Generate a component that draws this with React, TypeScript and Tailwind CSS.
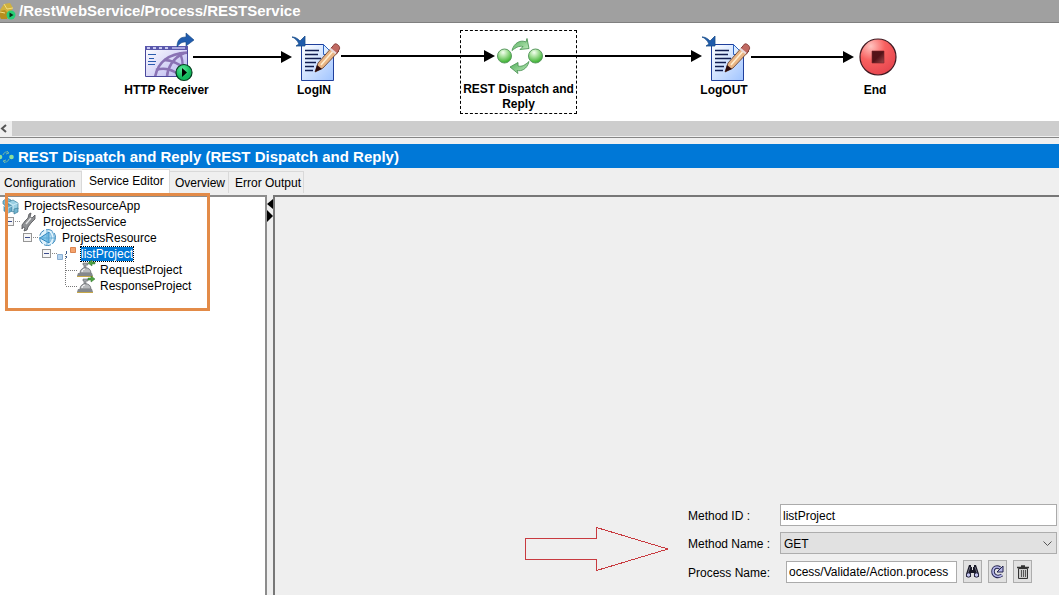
import React from 'react';

const links = [
  [193, 281, 57],
  [341, 484, 56],
  [545, 691, 56],
  [751, 843, 57],
];

function Connectors() {
  return (
    <svg className="absolute left-0 top-0" width="1059" height="98" viewBox="0 23 1059 98" aria-hidden="true">
      {links.map(([from, to, y]) => (
        <g key={from}>
          <path d={`M${from} ${y}H${to}`} stroke="#000" strokeWidth="2" />
          <path d={`M${to} ${y - 6}L${to + 11} ${y}L${to} ${y + 6}z`} />
        </g>
      ))}
    </svg>
  );
}

function ReceiverIcon() {
  return (
    <svg className="overflow-visible" width="50" height="50" viewBox="0 0 50 50" aria-hidden="true">
      <defs>
        <linearGradient id="rcvWin" x1="0" y1="0" x2="1" y2="1">
          <stop offset="0" stopColor="#fff" />
          <stop offset="1" stopColor="#b7b4f0" />
        </linearGradient>
        <radialGradient id="rcvPlay" cx=".4" cy=".3">
          <stop offset="0" stopColor="#5be89a" />
          <stop offset="1" stopColor="#12b85c" />
        </radialGradient>
        <clipPath id="rcvClip"><path d="M4 18h41v25H4z" /></clipPath>
      </defs>
      <path d="M3.500 13.500h42v30h-42z" fill="url(#rcvWin)" stroke="#4a489c" />
      <path d="M3 13h43v4H3z" fill="#5a58ac" />
      <path d="M5 15h24" stroke="#c9c8f2" strokeWidth="2" strokeDasharray="3 3" />
      <path d="M30 15h13" stroke="#a9a7de" strokeWidth="2" />
      <path d="M6 21.500h8M7 25.500h5M6 28.500h8M6 31.500h7" stroke="#2c5cae" />
      <g clipPath="url(#rcvClip)" stroke="#8a72b4" strokeWidth="2.600" fill="none">
        <path d="M13 45C15 30 26 20 47 19.500" />
        <path d="M22 27C30 27 38 31 46 38" />
        <path d="M14 37C22 34 32 36 40 45" />
        <path d="M25 45C25 35 31 25 42 20" />
        <path d="M37 20C42 26 41 36 37 45" />
      </g>
      <path d="M35 14c0-7 3-10 9-10V0l8 7-8 6V9c-4 0-6 1-9 5z" fill="#205cae" stroke="#174780" strokeWidth=".6" />
      <circle cx="42" cy="39.500" r="8" fill="url(#rcvPlay)" stroke="#063d20" strokeWidth="1.200" />
      <path d="M40 35l5 4.500-5 4.500z" />
    </svg>
  );
}

function LogIcon() {
  return (
    <svg width="50" height="50" viewBox="0 0 50 50" aria-hidden="true">
      <defs>
        <linearGradient id="logPage" x1="0" y1="0" x2="1" y2="1">
          <stop offset="0" stopColor="#fff" />
          <stop offset="1" stopColor="#a0c4ff" />
        </linearGradient>
      </defs>
      <path d="M9.500 11.500h22l10 10v26h-32z" fill="url(#logPage)" stroke="#1f3f9c" />
      <path d="M31.500 11.500l10 10h-10z" fill="#dcecff" stroke="#2e62c0" />
      <path d="M13 17.500h14M13 21.500h13M13 25.500h16M13 29.500h11M13 33.500h9M13 37.500h8" stroke="#101c50" strokeWidth="1.300" />
      <path d="M23 39l3-9 15-17 6 5-16 17z" fill="#e9b584" stroke="#5c3524" strokeWidth=".8" />
      <path d="M29 32l13-15" stroke="#fff0d2" strokeWidth="1.500" />
      <path d="M38.500 16l4-5c2-1 6 2 5 5l-3 5z" fill="#c06a62" stroke="#7d3331" strokeWidth=".8" />
      <path d="M38 15.500l6 5" stroke="#e9dada" strokeWidth="2" />
      <path d="M23 39l2-7 5 4z" fill="#2b0b0b" />
      <path d="M0 4c3 0 5 1 8 4l5-5v10H4l3-2C5 7 3 5 0 4z" fill="#205cab" stroke="#1b4f8c" strokeWidth=".8" />
    </svg>
  );
}

function DispatchIcon() {
  return (
    <svg width="50" height="50" viewBox="0 0 50 50" aria-hidden="true">
      <defs>
        <radialGradient id="ball" cx=".4" cy=".25" r=".7">
          <stop offset="0" stopColor="#f4fff0" />
          <stop offset=".45" stopColor="#a6e09a" />
          <stop offset="1" stopColor="#42b437" />
        </radialGradient>
        <linearGradient id="swap" x1="0" y1="0" x2="1" y2="1">
          <stop offset="0" stopColor="#4fae58" />
          <stop offset="1" stopColor="#c4ecc0" />
        </linearGradient>
      </defs>
      <g stroke="#5b9a62" fill="url(#ball)">
        <circle cx="8.500" cy="24" r="7" />
        <circle cx="39.500" cy="24" r="7" />
      </g>
      <g stroke="#4f9658" strokeWidth=".9" fill="url(#swap)">
        <path d="M16 18.500c2-8 9-11 14-8.500l1-3.500 2 10-9 1 3-3c-4-1-7 1-11 4z" />
        <path d="M33 29.500c-2 8-8 10-12 9l1 3-8-6.500 8-4.500v3.500c4 1 7-1 11-4.500z" />
      </g>
    </svg>
  );
}

function EndIcon() {
  return (
    <svg width="50" height="50" viewBox="0 0 50 50" aria-hidden="true">
      <defs>
        <radialGradient id="endRed" cx=".3" cy=".2" r=".8">
          <stop offset="0" stopColor="#ffc4c0" />
          <stop offset=".5" stopColor="#f8605f" />
          <stop offset="1" stopColor="#e84850" />
        </radialGradient>
        <linearGradient id="endStop" x1="0" y1="0" x2="1" y2="1">
          <stop offset=".5" stopColor="#541318" />
          <stop offset="1" stopColor="#a04a4d" />
        </linearGradient>
      </defs>
      <circle cx="28" cy="24" r="18" fill="url(#endRed)" stroke="#3f1a22" strokeWidth="1.200" />
      <path d="M22 18h12v12H22z" fill="url(#endStop)" stroke="#7a2328" strokeWidth=".6" />
    </svg>
  );
}

function Node({ place, label, children }: { place: string; label: string; children: React.ReactNode }) {
  return (
    <div className={`absolute flex flex-col items-center text-center text-xs font-bold leading-[15px] ${place}`}>
      {children}
      <span>{label}</span>
    </div>
  );
}

function Canvas() {
  return (
    <section className="relative h-[98px] shrink-0 overflow-hidden bg-white" aria-label="Process diagram">
      <Connectors />
      <Node place="left-[111px] top-[10px] w-[111px]" label="HTTP Receiver"><ReceiverIcon /></Node>
      <Node place="left-[284px] top-[10px] w-[60px]" label="LogIN"><span className="pl-1.5"><LogIcon /></span></Node>
      <div className="absolute left-[460px] top-[7px] h-[84px] w-[117px] border border-dashed border-black" />
      <Node place="left-[460px] top-[9px] w-[117px]" label="REST Dispatch and Reply"><span className="pl-1"><DispatchIcon /></span></Node>
      <Node place="left-[694px] top-[10px] w-[60px]" label="LogOUT"><span className="pl-1.5"><LogIcon /></span></Node>
      <Node place="left-[850px] top-[10px] w-[50px]" label="End"><EndIcon /></Node>
    </section>
  );
}

function Expander({ x }: { x: number }) {
  return (
    <g shapeRendering="crispEdges">
      <path d={`M${x + 0.5} 3.500h8v8h-8z`} fill="#f6f6f6" stroke="#969696" />
      <path d={`M${x + 2} 7.500h5`} stroke="#3c4c8c" />
      <path d={`M${x + 10} 7.500h5`} stroke="#888" strokeDasharray="1 1" />
    </g>
  );
}

function Bell({ reply }: { reply: boolean }) {
  return (
    <g>
      <path d="M65.500 -8V8M65.500 8.500H77" stroke="#777" strokeDasharray="1 1" shapeRendering="crispEdges" fill="none" />
      <path d="M83 1h5v2h-2v3h-2V3h-1z" fill="#a2a5a8" stroke="#696c70" strokeWidth=".6" />
      <path d="M80 11c0-7 11-7 11 0z" fill="#b9bbbd" stroke="#696c70" strokeWidth=".8" />
      <path d="M78 11h14l1 3H77z" fill="#85888c" />
      <path d="M77 14.500h16" stroke="#c6a848" />
      <path d="M82 10c0-2 2-3 3-3" stroke="#fff" fill="none" />
      {reply
        ? <path d="M88 0h3v-2l4 3-4 3V2h-3z" fill="#4fa142" stroke="#33752c" strokeWidth=".5" />
        : <path d="M95 0h-3v-2l-4 3 4 3V2h3z" fill="#4fa142" stroke="#33752c" strokeWidth=".5" />}
    </g>
  );
}

function AppGlyph() {
  return (
    <g stroke="#397c9a" strokeWidth=".7">
      <path d="M3 3l4-3 4 2v4l-4 2-4-2z" fill="#7fbad2" />
      <path d="M8 4l5-2 5 3v6l-5 3-5-3z" fill="#9bd0e4" />
      <path d="M4 8l4-2 4 2v5l-4 2-4-2z" fill="#68aac8" />
      <path d="M8 4l5 3 5-2M13 7v6M4 8l4 2 4-2M8 10v5" fill="none" stroke="#e1f6ff" />
      <path d="M14 11l4-1v4l-4 2z" fill="#74b5d0" />
    </g>
  );
}

function WrenchGlyph() {
  return (
    <g>
      <path d="M29 0l2-1-1 4 2 1 3-3v4l-4 4-3 4-1 3-3 1 1-3-2-1-1 2v-4l3-4 3-3z" fill="#8f9194" stroke="#505255" strokeWidth=".8" />
      <path d="M26 10l5-6" stroke="#e2e3e5" strokeWidth="1.400" />
    </g>
  );
}

function GlobeGlyph() {
  return (
    <g fill="none">
      <circle cx="47.500" cy="7.500" r="8" fill="#dff2fc" stroke="#3e87b9" strokeDasharray="7 2" />
      <path d="M40 8l9-6v11z" fill="#82c8ec" stroke="#2b82bd" />
      <path d="M49 2c3 3 3 8 0 11M52 2c3 3 3 9 0 12M47-1v17M39 8h17" stroke="#5ba6d3" strokeWidth=".9" />
    </g>
  );
}

function MethodGlyph() {
  return (
    <g>
      <path d="M57.500 8.500h5v5h-5z" fill="#b4d4f0" stroke="#8aaed2" />
      <path d="M70.500 1.500h5v5h-5z" fill="#f5a36d" stroke="#d98450" />
      <path d="M66.500 5v7" stroke="#3c5f90" strokeDasharray="3 2" />
    </g>
  );
}

function TreeRow({ width, label, selected, children }: { width: number; label: string; selected?: boolean; children: React.ReactNode }) {
  return (
    <li className="flex h-4 items-center" role="treeitem" aria-selected={!!selected}>
      <svg className="shrink-0 overflow-visible" width={width} height="16" aria-hidden="true">{children}</svg>
      <span className={selected ? 'bg-[#0078d7] text-white outline-1 outline-dotted outline-black' : ''}>{label}</span>
    </li>
  );
}

function Tree() {
  return (
    <div className="relative w-[267px] shrink-0 border-r-2 border-t-2 border-[#8c8c8c] bg-white">
      <ul role="tree" aria-label="Service resources" className="pt-px leading-[14px]">
        <TreeRow width={24} label="ProjectsResourceApp"><AppGlyph /></TreeRow>
        <TreeRow width={43} label="ProjectsService"><Expander x={5} /><WrenchGlyph /></TreeRow>
        <TreeRow width={62} label="ProjectsResource"><Expander x={23} /><GlobeGlyph /></TreeRow>
        <TreeRow width={81} label="listProject" selected><Expander x={42} /><MethodGlyph /></TreeRow>
        <TreeRow width={100} label="RequestProject"><Bell reply={false} /></TreeRow>
        <TreeRow width={100} label="ResponseProject"><Bell reply /></TreeRow>
      </ul>
      <div className="pointer-events-none absolute left-[5px] top-[-4px] h-[118px] w-[205px] border-3 border-[#e38b48]" />
    </div>
  );
}

function Splitter() {
  return (
    <div className="flex w-1.5 shrink-0 flex-col gap-px pt-1">
      <button type="button" aria-label="Collapse left"><svg width="6" height="10"><path d="M6 0v10L0 5z" /></svg></button>
      <button type="button" aria-label="Collapse right"><svg width="6" height="12"><path d="M0 0v12l6-6z" /></svg></button>
    </div>
  );
}

const tool = 'flex h-[23px] w-[19px] items-center justify-center border border-[#adadad] bg-[#e1e1e1]';
const field = 'h-[22px] min-w-0 border border-[#ababab] bg-white px-0.5 pt-px';

function MethodForm() {
  return (
    <form className="flex w-[369px] flex-col gap-1.5">
      <div className="flex items-center">
        <label htmlFor="method-id" className="w-[92px] pt-0.5">Method ID :</label>
        <input id="method-id" className={`${field} flex-1`} defaultValue="listProject" />
      </div>
      <div className="flex items-center">
        <label htmlFor="method-name" className="w-[92px] pt-0.5">Method Name :</label>
        <div className="relative flex flex-1">
          <select id="method-name" className="h-[22px] flex-1 appearance-none border border-[#adadad] bg-[#e1e1e1] px-[3px] pt-0.5">
            <option>GET</option>
          </select>
          <svg className="pointer-events-none absolute right-[5px] top-[9px]" width="9" height="6" fill="none" stroke="#555"><path d="M.5 .5l4 4 4-4" /></svg>
        </div>
      </div>
      <div className="flex items-center gap-1.5">
        <label htmlFor="process-name" className="w-[92px] pt-0.5">Process Name:</label>
        <input id="process-name" className={`${field} w-[171px]`} defaultValue="ocess/Validate/Action.process" />
        <button type="button" className={tool} aria-label="Browse">
          <svg width="15" height="15" viewBox="0 0 15 15">
            <path d="M4 1h2v2h1v3h1V3h1V1h2l1 3 2 6v3H9V9H6v4H1v-3l2-6z" fill="#171725" />
            <path d="M5 3L3 9M10 3l2 6" stroke="#686878" fill="none" />
            <circle cx="3.500" cy="11" r="2.200" fill="#c3c4ee" stroke="#25253d" />
            <circle cx="11.500" cy="11" r="2.200" fill="#c3c4ee" stroke="#25253d" />
          </svg>
        </button>
        <button type="button" className={tool} aria-label="Go to process">
          <svg width="13" height="15" viewBox="0 0 13 15" fill="none">
            <path d="M11 11C7 14 2 12 2 7.500S6 2 9 4" stroke="#20204c" strokeWidth="3.400" />
            <path d="M12 2v6H6z" fill="#b5b6e8" stroke="#20204c" />
            <path d="M11 11C7 14 2 12 2 7.500S6 2 9 4" stroke="#b5b6e8" strokeWidth="1.600" />
          </svg>
        </button>
        <button type="button" className={tool} aria-label="Delete">
          <svg width="12" height="14" viewBox="0 0 12 14" fill="none">
            <path d="M1.500 3.500h9v10h-9z" fill="#c9c9c9" stroke="#333" />
            <path d="M0 2.500h12M4 1h4" stroke="#333" strokeWidth="1.500" />
            <path d="M4.500 5v7M6.500 5v7M8.500 5v7" stroke="#555" />
          </svg>
        </button>
      </div>
    </form>
  );
}

export default function App() {
  const tab = 'flex items-center border-r border-t border-[#d9d9d9]';
  return (
    <div className="flex min-h-screen flex-col overflow-hidden bg-[#efefef] font-['Liberation_Sans',Arial,sans-serif] text-xs text-black">
      <header className="flex h-[23px] shrink-0 items-center gap-[3px] border-b border-[#808080] bg-[#a0a0a0] text-[15px] font-bold text-white">
        <svg width="16" height="18" viewBox="0 0 16 18" aria-hidden="true">
          <path d="M4 2l6-1 3 5-3 5-7 1-3-4z" fill="#d0b13e" />
          <path d="M0 9l5-1 4 4-2 5H1l-1-2z" fill="#b78e1f" />
          <path d="M4 2l3 5 6-1M0 10l5 1" stroke="#f2df81" fill="none" />
          <circle cx="11" cy="13" r="4.500" fill="#29cf77" />
          <path d="M9.500 10.500l4 2.500-4 2.500z" fill="#062c19" />
        </svg>
        <h1>/RestWebService/Process/RESTService</h1>
      </header>
      <Canvas />
      <div className="flex h-[15px] shrink-0 bg-[#cdcdcd]">
        <button type="button" aria-label="Scroll left" className="flex w-3 items-center bg-[#efefef]">
          <svg width="7" height="9" fill="none" stroke="#555" strokeWidth="2"><path d="M6 1L2 4.500 6 8" /></svg>
        </button>
      </div>
      <div className="h-2 shrink-0 border-b-6 border-t border-b-[#efefef] border-t-[#efefef] bg-[#858585]" />
      <div className="flex h-6 shrink-0 items-center gap-1 bg-[#0078d7] pt-px text-[15px] font-bold text-white">
        <svg width="14" height="14" viewBox="0 0 14 14" fill="none" aria-hidden="true">
          <circle cx="0" cy="7" r="2.300" fill="#8ce19b" />
          <circle cx="11.500" cy="7" r="2.300" fill="#8ce19b" />
          <path d="M3 5c1-3 4-4 6-2M9 9c-1 3-4 4-6 2M7 1l2 2-3 1M5 13l-2-2 3-1" stroke="#75b8a3" />
        </svg>
        <h2>REST Dispatch and Reply (REST Dispatch and Reply)</h2>
      </div>
      <div role="tablist" className="flex h-[27px] shrink-0 items-start">
        <button type="button" role="tab" className={`${tab} mt-[3px] h-[22px] w-[82px] pl-1`}>Configuration</button>
        <button type="button" role="tab" aria-selected="true" className={`${tab} mt-px h-[25px] w-[88px] bg-white pb-0.5 pl-[7px]`}>Service Editor</button>
        <button type="button" role="tab" className={`${tab} mt-[3px] h-[22px] w-[59px] pl-[5px]`}>Overview</button>
        <button type="button" role="tab" className={`${tab} mt-[3px] h-[22px] w-[75px] pl-1.5`}><span className="whitespace-nowrap">Error Output</span></button>
      </div>
      <main className="flex flex-1">
        <Tree />
        <Splitter />
        <section className="flex flex-1 items-end justify-end gap-[19px] border-l-2 border-t-2 border-[#777] pb-3 pr-0.5">
          <svg className="mb-3" width="144" height="44" fill="none" stroke="#c83a3f" shapeRendering="crispEdges" aria-hidden="true">
            <path d="M.5 11.500H71.500V.5L143 22 71.500 43.500V32.500H.5z" />
          </svg>
          <MethodForm />
        </section>
      </main>
    </div>
  );
}
